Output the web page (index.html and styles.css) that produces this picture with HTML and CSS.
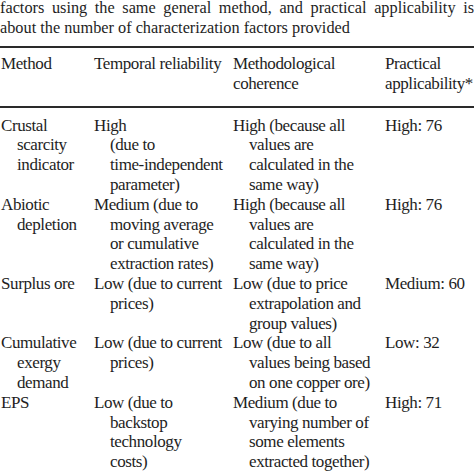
FILE: index.html
```html
<!DOCTYPE html>
<html lang="en">
<head>
<meta charset="utf-8">
<title>Table</title>
<link rel="stylesheet" href="styles.css">
</head>
<body>
<div class="page">
  <p class="caption">factors using the same general method, and practical applicability is about the number of characterization factors provided</p>
  <div class="table">
    <div class="row head">
      <div class="cell">Method</div>
      <div class="cell">Temporal reliability</div>
      <div class="cell">Methodological coherence</div>
      <div class="cell">Practical applicability*</div>
    </div>
    <div class="body">
      <div class="row">
        <div class="cell">Crustal scarcity indicator</div>
        <div class="cell">High<br>(due to <span class="nw">time-independent</span> parameter)</div>
        <div class="cell">High (because all values are calculated in the same way)</div>
        <div class="cell">High: 76</div>
      </div>
      <div class="row">
        <div class="cell">Abiotic depletion</div>
        <div class="cell">Medium (due to moving average or cumulative extraction rates)</div>
        <div class="cell">High (because all values are calculated in the same way)</div>
        <div class="cell">High: 76</div>
      </div>
      <div class="row">
        <div class="cell">Surplus ore</div>
        <div class="cell">Low (due to current prices)</div>
        <div class="cell">Low (due to price extrapolation and group values)</div>
        <div class="cell">Medium: 60</div>
      </div>
      <div class="row">
        <div class="cell">Cumulative exergy demand</div>
        <div class="cell">Low (due to current prices)</div>
        <div class="cell">Low (due to all values being based on one copper ore)</div>
        <div class="cell">Low: 32</div>
      </div>
      <div class="row">
        <div class="cell">EPS</div>
        <div class="cell">Low (due to backstop technology costs)</div>
        <div class="cell">Medium (due to varying number of some elements extracted together)</div>
        <div class="cell">High: 71</div>
      </div>
    </div>
  </div>
</div>
</body>
</html>
```

FILE: styles.css
```css
html, body {
  margin: 0;
  padding: 0;
  background: #ffffff;
  overflow: hidden;
}

.page {
  width: 474px;
  font-family: "Liberation Serif", "Times New Roman", serif;
  font-size: 17px;
  line-height: 19.8px;
  letter-spacing: -0.4px;
  color: #1e1e1e;
}

.caption {
  margin: -2px 0 0 0;
  font-size: 16.3px;
  line-height: 20px;
  letter-spacing: 0;
  text-align: justify;
}

.table {
  width: 474px;
  margin-top: 8px;
  border-top: 2px solid #2a2a2a;
}

.row {
  display: grid;
  grid-template-columns: 94px 139px 152px 89px;
}

.head {
  padding: 6px 0 12px;
  border-bottom: 2px solid #2a2a2a;
}

.body {
  padding-top: 8px;
}

.cell {
  padding-left: 16px;
  text-indent: -16px;
}

.row .cell:nth-child(1) {
  padding-left: 17px;
  padding-right: 2px;
}

.row .cell:nth-child(2) {
  padding-right: 10.7px;
}

.row .cell:nth-child(3) {
  padding-right: 11px;
}

.row .cell:nth-child(4) {
  padding-right: 0;
}

.head .cell {
  text-indent: 0;
}

.head .cell:nth-child(n) {
  padding-left: 0;
  padding-right: 0;
}

.head .cell:nth-child(1) {
  padding-left: 1px;
}

.nw {
  white-space: nowrap;
}
```
